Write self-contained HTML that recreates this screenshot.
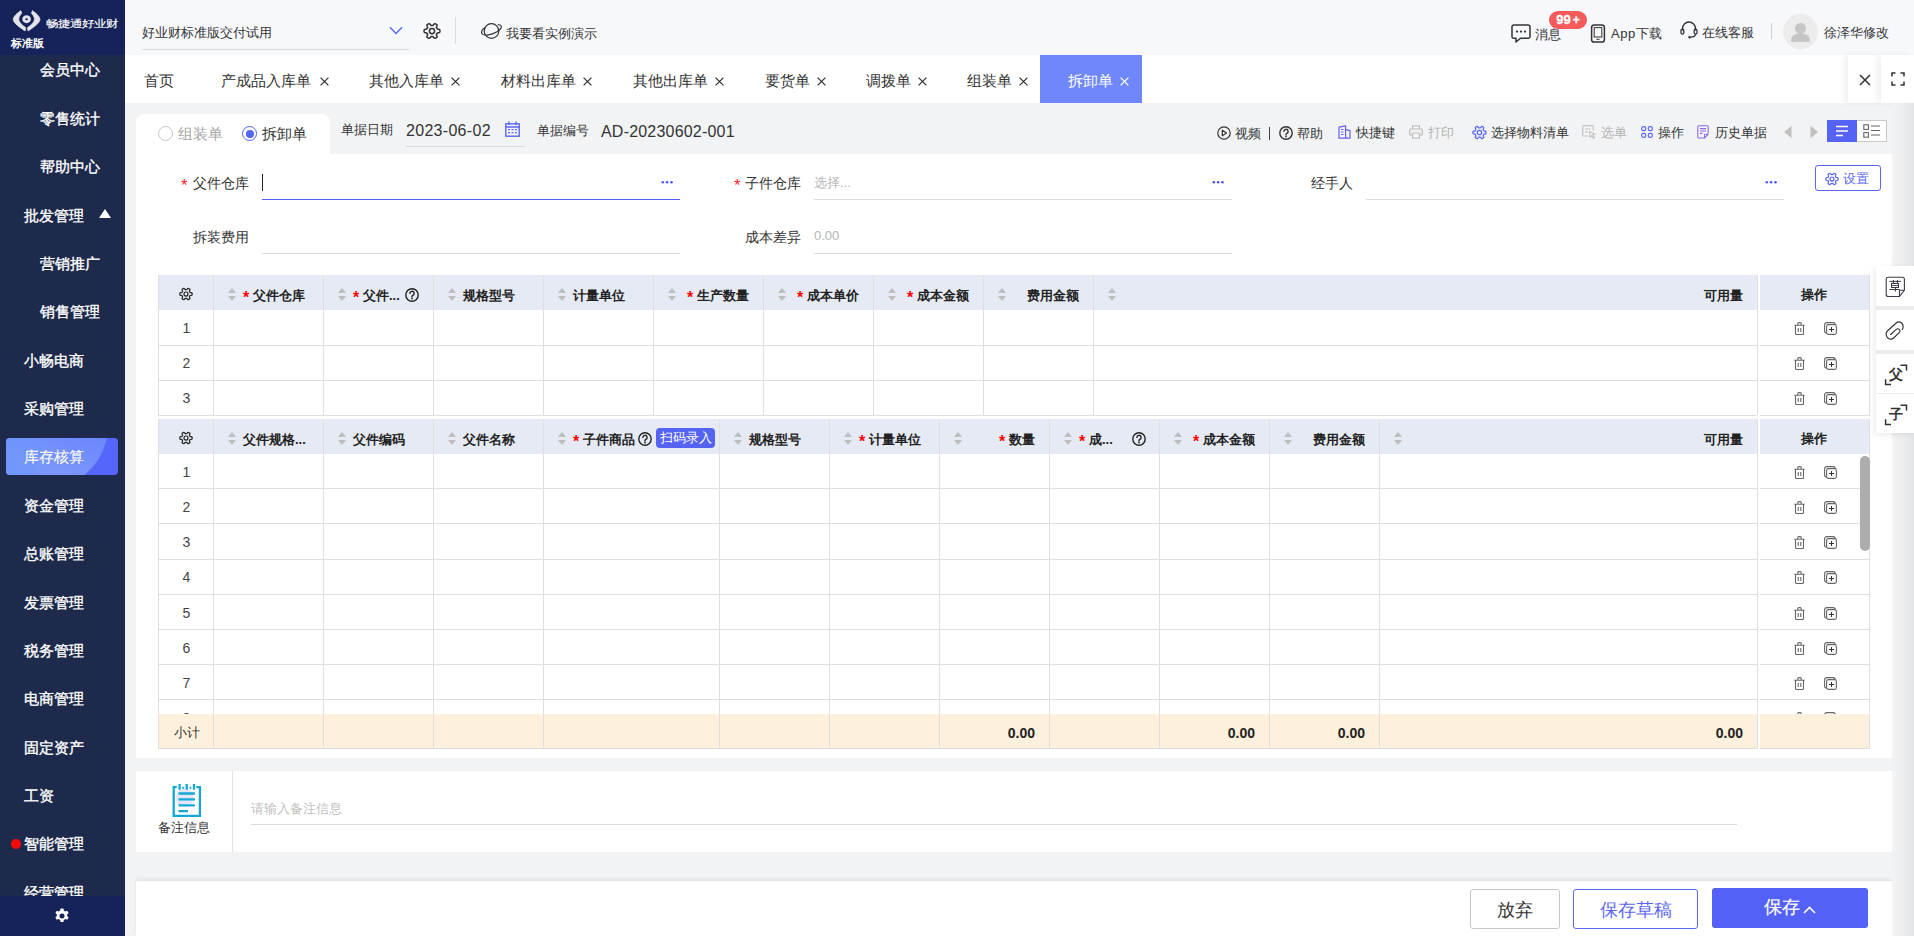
<!DOCTYPE html>
<html><head><meta charset="utf-8">
<style>
*{box-sizing:border-box;margin:0;padding:0}
html,body{width:1914px;height:936px;overflow:hidden}
body{position:relative;background:#f2f3f5;font-family:"Liberation Sans",sans-serif;color:#333;font-size:13px}
.a{position:absolute;white-space:nowrap}
.t{position:absolute;white-space:nowrap;line-height:20px;height:20px}
svg{position:absolute;overflow:visible}
/* sidebar */
#side{left:0;top:0;width:125px;height:936px;background:#1e2a4c}
#side .m{position:absolute;color:#fff;font-size:15px;line-height:20px;white-space:nowrap;font-weight:400;-webkit-text-stroke:0.35px #fff}
/* table */
.tb{position:absolute;background:#fff}
.hd{position:absolute;background:#e6eaf4}
.vl{position:absolute;width:1px;background:#dcdcdc}
.hl{position:absolute;height:1px;background:#dcdcdc}
.ht{position:absolute;font-size:13px;font-weight:bold;color:#333;line-height:20px;white-space:nowrap}
.rq{color:#f5222d;font-weight:normal}
</style></head><body>

<svg width="0" height="0" style="position:absolute">
<defs>
<symbol id="gear" viewBox="0 0 20 20"><path d="M18.8 10.0L18.8 10.6L18.7 11.1L18.4 11.7L17.2 11.9L16.1 12.1L15.7 12.4L15.6 12.7L15.4 13.1L15.2 13.4L14.9 13.8L14.8 14.2L15.3 15.3L15.7 16.5L15.4 17.0L14.9 17.3L14.4 17.6L13.9 17.9L13.4 18.1L12.8 18.1L11.9 17.2L11.2 16.3L10.8 16.1L10.4 16.2L10.0 16.2L9.6 16.2L9.2 16.1L8.8 16.3L8.1 17.2L7.2 18.1L6.6 18.1L6.1 17.9L5.6 17.6L5.1 17.3L4.6 17.0L4.3 16.5L4.7 15.3L5.2 14.2L5.1 13.8L4.8 13.4L4.6 13.1L4.4 12.7L4.3 12.4L3.9 12.1L2.8 11.9L1.6 11.7L1.3 11.1L1.2 10.6L1.2 10.0L1.2 9.4L1.3 8.9L1.6 8.3L2.8 8.1L3.9 7.9L4.3 7.6L4.4 7.3L4.6 6.9L4.8 6.6L5.1 6.2L5.2 5.8L4.7 4.7L4.3 3.5L4.6 3.0L5.1 2.7L5.6 2.4L6.1 2.1L6.6 1.9L7.2 1.9L8.1 2.8L8.8 3.7L9.2 3.9L9.6 3.8L10.0 3.8L10.4 3.8L10.8 3.9L11.2 3.7L11.9 2.8L12.8 1.9L13.4 1.9L13.9 2.1L14.4 2.4L14.9 2.7L15.4 3.0L15.7 3.5L15.3 4.7L14.8 5.8L14.9 6.2L15.2 6.6L15.4 6.9L15.6 7.3L15.7 7.6L16.1 7.9L17.2 8.1L18.4 8.3L18.7 8.9L18.8 9.4Z" fill="none" stroke="currentColor" stroke-width="1.7" stroke-linejoin="round"/><circle cx="10" cy="10" r="2.9" fill="none" stroke="currentColor" stroke-width="1.7"/></symbol>
<symbol id="sort" viewBox="0 0 8 13"><path d="M4 0L8 5H0Z M0 8H8L4 13Z" fill="#bdbdbd"/></symbol>
<symbol id="help" viewBox="0 0 14 14"><circle cx="7" cy="7" r="6.2" fill="none" stroke="currentColor" stroke-width="1.4"/><path d="M4.9 5.4a2.1 2.1 0 1 1 2.9 1.95c-.55.25-.8.6-.8 1.15v.6" fill="none" stroke="currentColor" stroke-width="1.4" stroke-linecap="round"/><circle cx="7" cy="10.6" r=".85" fill="currentColor"/></symbol>
<symbol id="trash" viewBox="0 0 11 13"><path d="M1.5 3.5V11.3a1.2 1.2 0 0 0 1.2 1.2h5.6a1.2 1.2 0 0 0 1.2-1.2V3.5M0.3 3.2H10.7M3.8 3V1.6a1 1 0 0 1 1-1h1.4a1 1 0 0 1 1 1V3M4.2 6V10M6.8 6V10" fill="none" stroke="#666" stroke-width="1.1"/></symbol>
<symbol id="copy" viewBox="0 0 13 13"><path d="M2.8 11.2a2.2 2.2 0 0 1-2.2-2.2V2.8a2.2 2.2 0 0 1 2.2-2.2h6.2a2.2 2.2 0 0 1 2.2 2.2" fill="none" stroke="#666" stroke-width="1.1"/><rect x="2.6" y="2.6" width="9.8" height="9.8" rx="1.8" fill="#fff" stroke="#666" stroke-width="1.1"/><path d="M7.5 5V10M5 7.5H10" stroke="#333" stroke-width="1.1"/></symbol>
</defs></svg>
<!-- SIDEBAR -->
<div id="side" class="a">
  <div class="a" style="left:0;top:0;width:125px;height:55px;background:#16235a"></div>
  <svg style="left:0;top:0" width="125" height="55" viewBox="0 0 125 55">
    <path d="M20.8 10.6C17.5 13.0 13.2 16.5 13.2 19.5C13.2 22.8 19.0 26.8 25.0 31.0C25.8 30.0 25.8 28.0 25.6 27.4C21.0 24.4 18.8 21.5 18.8 19.3C18.8 17.0 20.2 15.0 21.8 13.2Z" fill="#e4e4ea" stroke="#e4e4ea" stroke-width="0.6" stroke-linejoin="round"/>
    <path d="M32.4 10.6C35.7 13.0 40.0 16.5 40.0 19.5C40.0 22.8 34.2 26.8 28.2 31.0C27.4 30.0 27.4 28.0 27.6 27.4C32.2 24.4 34.4 21.5 34.4 19.3C34.4 17.0 33.0 15.0 31.4 13.2Z" fill="#e4e4ea" stroke="#e4e4ea" stroke-width="0.6" stroke-linejoin="round"/>
    <ellipse cx="26.6" cy="19.2" rx="2.8" ry="2.5" fill="none" stroke="#e4e4ea" stroke-width="3"/>
  </svg>
  <div class="a" style="left:46px;top:16px;color:#fff;font-size:12.3px;line-height:16px;transform:scaleY(0.8);transform-origin:0 50%;-webkit-text-stroke:0.2px #fff">畅捷通好业财</div>
  <div class="a" style="left:11px;top:35px;color:#fff;font-size:11px;line-height:16px;font-weight:600">标准版</div>
  <div class="m" style="left:40px;top:60px">会员中心</div>
  <div class="m" style="left:40px;top:109px">零售统计</div>
  <div class="m" style="left:40px;top:157px">帮助中心</div>
  <div class="m" style="left:24px;top:206px">批发管理</div>
  <svg style="left:99px;top:209px" width="12" height="9" viewBox="0 0 12 9"><path d="M6 0 L12 9 L0 9 Z" fill="#fff"/></svg>
  <div class="m" style="left:40px;top:254px">营销推广</div>
  <div class="m" style="left:40px;top:302px">销售管理</div>
  <div class="m" style="left:24px;top:351px">小畅电商</div>
  <div class="m" style="left:24px;top:399px">采购管理</div>
  <div class="a" style="left:6px;top:438px;width:112px;height:37px;border-radius:4px;overflow:hidden;background:#5666fb">
    <div class="a" style="left:-25px;top:-76px;width:127px;height:127px;border-radius:50%;background:linear-gradient(200deg,#5f7afc 25%,#7b98fc 75%);"></div>
    <div class="a" style="left:-10px;top:0;width:60px;height:37px;background:linear-gradient(90deg,rgba(106,150,252,0.9),rgba(106,150,252,0))"></div>
  </div>
  <div class="m" style="left:24px;top:447px;-webkit-text-stroke:0.1px #fff">库存核算</div>
  <div class="m" style="left:24px;top:496px">资金管理</div>
  <div class="m" style="left:24px;top:544px">总账管理</div>
  <div class="m" style="left:24px;top:593px">发票管理</div>
  <div class="m" style="left:24px;top:641px">税务管理</div>
  <div class="m" style="left:24px;top:689px">电商管理</div>
  <div class="m" style="left:24px;top:738px">固定资产</div>
  <div class="m" style="left:24px;top:786px">工资</div>
  <div class="a" style="left:11px;top:839px;width:9.5px;height:9.5px;border-radius:50%;background:#f50a0a"></div>
  <div class="m" style="left:24px;top:834px">智能管理</div>
  <div class="m" style="left:24px;top:883px">经营管理</div>
  <div class="a" style="left:0;top:896px;width:125px;height:40px;background:#16235a"></div>
  <svg style="left:54px;top:908px" width="16" height="16" viewBox="0 0 16 16">
    <path d="M6.6 0.5 h2.8 l0.4 2 a5.6 5.6 0 0 1 1.5 0.9 l1.9-0.7 1.4 2.4-1.5 1.3 a5.6 5.6 0 0 1 0 1.7 l1.5 1.3-1.4 2.4-1.9-0.7 a5.6 5.6 0 0 1-1.5 0.9 l-0.4 2 h-2.8 l-0.4-2 a5.6 5.6 0 0 1-1.5-0.9 l-1.9 0.7-1.4-2.4 1.5-1.3 a5.6 5.6 0 0 1 0-1.7 l-1.5-1.3 1.4-2.4 1.9 0.7 a5.6 5.6 0 0 1 1.5-0.9 Z M8 5.4 a2.6 2.6 0 1 0 0.01 0 Z" fill="#fff" fill-rule="evenodd"/>
  </svg>
</div>

<!-- TOP BAR -->
<div class="a" style="left:125px;top:0;width:1789px;height:55px;background:#f7f8fc"></div>
<div class="t" style="left:142px;top:23px;font-size:13px;color:#333">好业财标准版交付试用</div>
<div class="a" style="left:142px;top:49px;width:267px;height:1px;background:#dadada"></div>
<svg style="left:389px;top:26px" width="14" height="9" viewBox="0 0 14 9"><path d="M1 1.2L7 7.5L13 1.2" fill="none" stroke="#5a67f2" stroke-width="1.4"/></svg>
<svg style="left:423px;top:22px;color:#333" width="18" height="18"><use href="#gear"/></svg>
<div class="a" style="left:455px;top:17px;width:1px;height:27px;background:#dcdcdc"></div>
<svg style="left:480px;top:22px" width="23" height="18" viewBox="0 0 23 18"><circle cx="11.5" cy="9" r="7.3" fill="none" stroke="#333" stroke-width="1.2"/><path d="M5.2 5.4C1.6 7.6 0.6 10.6 2.4 12.1 4.6 14 11 13 16.6 10 20.6 7.8 22.5 4.8 20.8 3.4 20 2.7 18.9 2.6 17.7 2.9" fill="none" stroke="#333" stroke-width="1.2"/></svg>
<div class="t" style="left:506px;top:24px;font-size:13px;color:#333">我要看实例演示</div>

<svg style="left:1511px;top:24px" width="20" height="19" viewBox="0 0 20 19"><path d="M2.8 1h14.4a1.8 1.8 0 0 1 1.8 1.8v9.6a1.8 1.8 0 0 1-1.8 1.8H9.5L5 18V14.2H2.8A1.8 1.8 0 0 1 1 12.4V2.8A1.8 1.8 0 0 1 2.8 1Z" fill="none" stroke="#333" stroke-width="1.5" stroke-linejoin="round"/><circle cx="6" cy="7.6" r="1.1" fill="#333"/><circle cx="10" cy="7.6" r="1.1" fill="#333"/><circle cx="14" cy="7.6" r="1.1" fill="#333"/></svg>
<div class="t" style="left:1535px;top:25px;font-size:13px;color:#333">消息</div>
<div class="a" style="left:1549px;top:11px;width:38px;height:18px;border-radius:9px;background:#f65a5b;color:#fff;font-weight:bold;font-size:13px;line-height:18px;text-align:center;-webkit-text-stroke:0.3px #fff">99<span style="font-size:12px;margin-left:2px">+</span></div>
<svg style="left:1590px;top:24px" width="16" height="19" viewBox="0 0 16 19"><rect x="1.6" y="1" width="12.8" height="17" rx="2.6" fill="none" stroke="#333" stroke-width="1.5"/><rect x="4.2" y="3.6" width="7.6" height="9.4" fill="none" stroke="#333" stroke-width="1"/><path d="M6.5 15.3H9.5" stroke="#333" stroke-width="1.1"/></svg>
<div class="t" style="left:1611px;top:24px;font-size:13px;color:#333;letter-spacing:0.5px">App下载</div>
<svg style="left:1680px;top:21px" width="18" height="18" viewBox="0 0 18 18"><path d="M2.5 9.5V7.5a6.5 6.5 0 0 1 13 0V9.5" fill="none" stroke="#333" stroke-width="1.4"/><rect x="1" y="8.2" width="2.8" height="5" rx="1.4" fill="none" stroke="#333" stroke-width="1.3"/><rect x="14.2" y="8.2" width="2.8" height="5" rx="1.4" fill="none" stroke="#333" stroke-width="1.3"/><path d="M15.5 13.2C15.5 15 13.5 16 10.5 16.2" fill="none" stroke="#333" stroke-width="1.3"/><circle cx="9.6" cy="16.2" r="1.2" fill="#333"/></svg>
<div class="t" style="left:1702px;top:23px;font-size:13px;color:#333">在线客服</div>
<div class="a" style="left:1771px;top:23px;width:1px;height:16px;background:#cfcfcf"></div>
<div class="a" style="left:1783px;top:14px;width:35px;height:35px;border-radius:50%;background:#ececec;overflow:hidden">
  <div class="a" style="left:12.3px;top:8.5px;width:10.5px;height:11px;border-radius:50%;background:#c6c6c6"></div>
  <div class="a" style="left:8px;top:20px;width:19px;height:8px;border-radius:8px 8px 2px 2px;background:#c6c6c6"></div>
</div>
<div class="t" style="left:1824px;top:23px;font-size:13px;color:#333">徐泽华修改</div>
<!-- TAB BAR -->
<div class="a" style="left:125px;top:55px;width:1789px;height:48px;background:#fff"></div>
<div class="a" style="left:1040px;top:55px;width:102px;height:48px;background:#6f87fb"></div>
<div class="a" style="left:144px;top:71px;font-size:15px;line-height:20px;color:#333">首页</div>
<div class="a" style="left:221px;top:71px;font-size:15px;line-height:20px;color:#333">产成品入库单</div>
<svg style="left:320px;top:77px" width="9" height="9" viewBox="0 0 9 9"><path d="M0.6 0.6L8.4 8.4M8.4 0.6L0.6 8.4" stroke="#333" stroke-width="1.3"/></svg>
<div class="a" style="left:369px;top:71px;font-size:15px;line-height:20px;color:#333">其他入库单</div>
<svg style="left:451px;top:77px" width="9" height="9" viewBox="0 0 9 9"><path d="M0.6 0.6L8.4 8.4M8.4 0.6L0.6 8.4" stroke="#333" stroke-width="1.3"/></svg>
<div class="a" style="left:501px;top:71px;font-size:15px;line-height:20px;color:#333">材料出库单</div>
<svg style="left:583px;top:77px" width="9" height="9" viewBox="0 0 9 9"><path d="M0.6 0.6L8.4 8.4M8.4 0.6L0.6 8.4" stroke="#333" stroke-width="1.3"/></svg>
<div class="a" style="left:633px;top:71px;font-size:15px;line-height:20px;color:#333">其他出库单</div>
<svg style="left:715px;top:77px" width="9" height="9" viewBox="0 0 9 9"><path d="M0.6 0.6L8.4 8.4M8.4 0.6L0.6 8.4" stroke="#333" stroke-width="1.3"/></svg>
<div class="a" style="left:765px;top:71px;font-size:15px;line-height:20px;color:#333">要货单</div>
<svg style="left:817px;top:77px" width="9" height="9" viewBox="0 0 9 9"><path d="M0.6 0.6L8.4 8.4M8.4 0.6L0.6 8.4" stroke="#333" stroke-width="1.3"/></svg>
<div class="a" style="left:866px;top:71px;font-size:15px;line-height:20px;color:#333">调拨单</div>
<svg style="left:918px;top:77px" width="9" height="9" viewBox="0 0 9 9"><path d="M0.6 0.6L8.4 8.4M8.4 0.6L0.6 8.4" stroke="#333" stroke-width="1.3"/></svg>
<div class="a" style="left:967px;top:71px;font-size:15px;line-height:20px;color:#333">组装单</div>
<svg style="left:1019px;top:77px" width="9" height="9" viewBox="0 0 9 9"><path d="M0.6 0.6L8.4 8.4M8.4 0.6L0.6 8.4" stroke="#333" stroke-width="1.3"/></svg>
<div class="a" style="left:1068px;top:71px;font-size:15px;line-height:20px;color:#fff">拆卸单</div>
<svg style="left:1120px;top:77px" width="9" height="9" viewBox="0 0 9 9"><path d="M0.6 0.6L8.4 8.4M8.4 0.6L0.6 8.4" stroke="#fff" stroke-width="1.3"/></svg>
<div class="a" style="left:1848px;top:55px;width:33px;height:48px;background:#fff;box-shadow:-4px 0 6px rgba(0,0,0,0.06)"></div>
<svg style="left:1859px;top:74px" width="12" height="12" viewBox="0 0 12 12"><path d="M1 1L11 11M11 1L1 11" stroke="#333" stroke-width="1.5"/></svg>
<div class="a" style="left:1881px;top:55px;width:33px;height:48px;background:#fff;box-shadow:-4px 0 6px rgba(0,0,0,0.06)"></div>
<svg style="left:1891px;top:72px" width="14" height="14" viewBox="0 0 14 14"><path d="M1 4.5V1H4.5M9.5 1H13V4.5M13 9.5V13H9.5M4.5 13H1V9.5" fill="none" stroke="#333" stroke-width="1.5"/></svg>

<!-- radio tab -->
<div class="a" style="left:136px;top:114px;width:194px;height:45px;background:#fff;border-radius:8px 8px 0 0"></div>
<!-- main white panel -->
<div class="a" style="left:136px;top:154px;width:1756px;height:604px;background:#fff"></div>
<!-- remark panel -->
<div class="a" style="left:136px;top:771px;width:1756px;height:81px;background:#fff"></div>
<!-- footer -->
<div class="a" style="left:136px;top:881px;width:1756px;height:55px;background:#fff;box-shadow:0 -2px 4px rgba(0,0,0,0.08)"></div>
<!-- right shadow strip -->
<div class="a" style="left:1892px;top:103px;width:22px;height:833px;background:linear-gradient(to right,#f2f3f5 0%,#eeeff1 40%,#e3e4e7 100%)"></div>
<!-- HEADER STRIP -->
<div class="a" style="left:158px;top:126px;width:15px;height:15px;border-radius:50%;border:1px solid #c4c4c4;background:#fff"></div>
<div class="t" style="left:178px;top:124px;font-size:15px;color:#a6a6a6">组装单</div>
<div class="a" style="left:242px;top:126px;width:15px;height:15px;border-radius:50%;border:1.5px solid #5663f6;background:#fff"></div>
<div class="a" style="left:245.5px;top:129.5px;width:8px;height:8px;border-radius:50%;background:#5663f6"></div>
<div class="t" style="left:262px;top:124px;font-size:15px;color:#333">拆卸单</div>
<div class="t" style="left:341px;top:120px;font-size:13px;color:#333">单据日期</div>
<div class="t" style="left:406px;top:121px;font-size:16px;color:#333;letter-spacing:0.3px">2023-06-02</div>
<svg style="left:505px;top:121px" width="15" height="16" viewBox="0 0 15 16"><rect x="0.8" y="2.8" width="13.4" height="12.4" fill="none" stroke="#5a67f2" stroke-width="1.4"/><path d="M0.8 6H14.2M4 0.5V4M11 0.5V4" stroke="#5a67f2" stroke-width="1.4"/><path d="M3 8.6H5M6.5 8.6H8.5M10 8.6H12M3 11.6H5M6.5 11.6H8.5M10 11.6H12" stroke="#5a67f2" stroke-width="1.2"/></svg>
<div class="a" style="left:406px;top:146px;width:119px;height:1px;background:#dadada"></div>
<div class="t" style="left:537px;top:121px;font-size:13px;color:#333">单据编号</div>
<div class="t" style="left:601px;top:122px;font-size:16px;color:#333;letter-spacing:0.2px">AD-20230602-001</div>

<svg style="left:1217px;top:126px" width="14" height="14" viewBox="0 0 14 14"><circle cx="7" cy="7" r="6.2" fill="none" stroke="#333" stroke-width="1.2"/><path d="M5.3 4.2L9.6 7L5.3 9.8Z" fill="none" stroke="#333" stroke-width="1.2" stroke-linejoin="round"/></svg>
<div class="t" style="left:1235px;top:124px;font-size:13px;color:#333">视频</div>
<div class="a" style="left:1269px;top:127px;width:1px;height:13px;background:#444"></div>
<svg style="left:1279px;top:126px;color:#333" width="14" height="14"><use href="#help"/></svg>
<div class="t" style="left:1297px;top:124px;font-size:13px;color:#333">帮助</div>
<svg style="left:1338px;top:125px" width="13" height="14" viewBox="0 0 13 14"><path d="M1 2.2L7.6 0.8V13.2H1Z M7.6 4.6L12 5.6V13.2H7.6" fill="none" stroke="#6a5cf5" stroke-width="1.2" stroke-linejoin="round"/><path d="M3 4.5H5.6M3 7H5.6M3 9.5H5.6" stroke="#6a5cf5" stroke-width="1"/></svg>
<div class="t" style="left:1356px;top:123px;font-size:13px;color:#333">快捷键</div>
<svg style="left:1409px;top:125px" width="14" height="14" viewBox="0 0 14 14"><path d="M3.5 4V1H10.5V4M3.5 10H1.5A.8.8 0 0 1 .7 9.2V4.8A.8.8 0 0 1 1.5 4H12.5A.8.8 0 0 1 13.3 4.8V9.2A.8.8 0 0 1 12.5 10H10.5M3.5 8H10.5V13H3.5Z" fill="none" stroke="#bdbdbd" stroke-width="1.2" stroke-linejoin="round"/></svg>
<div class="t" style="left:1428px;top:123px;font-size:13px;color:#b3b3b3">打印</div>
<svg style="left:1472px;top:125px;color:#5a67f2" width="15" height="15"><use href="#gear"/></svg>
<div class="t" style="left:1491px;top:123px;font-size:13px;color:#333">选择物料清单</div>
<svg style="left:1582px;top:125px" width="14" height="14" viewBox="0 0 14 14"><path d="M6 11H1.6A.9.9 0 0 1 .7 10.1V1.6A.9.9 0 0 1 1.6 .7H10.4A.9.9 0 0 1 11.3 1.6V5.5M3 4H8.5M3 6.8H5.5" fill="none" stroke="#c4c4c4" stroke-width="1.2"/><path d="M7.5 6.5L13 9.2 10.6 10 12.6 12.8 11.6 13.5 9.6 10.7 8 12.5Z" fill="none" stroke="#c4c4c4" stroke-width="1.1" stroke-linejoin="round"/></svg>
<div class="t" style="left:1601px;top:123px;font-size:13px;color:#b3b3b3">选单</div>
<svg style="left:1641px;top:126px" width="12" height="12" viewBox="0 0 12 12"><rect x=".7" y=".7" width="4" height="4" rx="1.6" fill="none" stroke="#5a67f2" stroke-width="1.2"/><rect x="7.3" y=".7" width="4" height="4" rx="1.6" fill="none" stroke="#5a67f2" stroke-width="1.2"/><rect x=".7" y="7.3" width="4" height="4" rx="1.6" fill="none" stroke="#5a67f2" stroke-width="1.2"/><rect x="7.3" y="7.3" width="4" height="4" rx="1.6" fill="none" stroke="#5a67f2" stroke-width="1.2"/></svg>
<div class="t" style="left:1658px;top:123px;font-size:13px;color:#333">操作</div>
<svg style="left:1697px;top:125px" width="13" height="14" viewBox="0 0 13 14"><path d="M7.5 13H1.8A1 1 0 0 1 .8 12V1.8A1 1 0 0 1 1.8 .8H10.2A1 1 0 0 1 11.2 1.8V8.5M3 3.6H9M3 6H9M3 8.4H5.5M7.5 13V10.2A1 1 0 0 1 8.5 9.2H11.2Z" fill="none" stroke="#8a6cf0" stroke-width="1.1" stroke-linejoin="round"/></svg>
<div class="t" style="left:1715px;top:123px;font-size:13px;color:#333">历史单据</div>
<svg style="left:1784px;top:126px" width="8" height="12" viewBox="0 0 8 12"><path d="M7.5 0L0 6L7.5 12Z" fill="#bfbfbf"/></svg>
<svg style="left:1810px;top:126px" width="8" height="12" viewBox="0 0 8 12"><path d="M0.5 0L8 6L0.5 12Z" fill="#bfbfbf"/></svg>
<div class="a" style="left:1827px;top:120px;width:60px;height:22px;border:1px solid #c9c9c9;background:#fff"></div>
<div class="a" style="left:1827px;top:120px;width:30px;height:22px;background:#5563f5"></div>
<svg style="left:1835px;top:125px" width="14" height="12" viewBox="0 0 14 12"><path d="M1 1.5H13M1 6H13M1 10.5H8" stroke="#fff" stroke-width="1.3"/></svg>
<svg style="left:1863px;top:124px" width="18" height="14" viewBox="0 0 18 14"><rect x=".8" y=".8" width="4.6" height="4.6" fill="none" stroke="#666" stroke-width="1.1"/><rect x=".8" y="8.6" width="4.6" height="4.6" fill="none" stroke="#666" stroke-width="1.1"/><path d="M8 2H17M8 6.5H17M8 11H17" stroke="#666" stroke-width="1.1"/></svg>
<!-- FORM -->
<div class="t" style="left:181px;top:176px;font-size:17px;color:#f5222d">*</div>
<div class="t" style="left:193px;top:173px;font-size:14px;color:#333">父件仓库</div>
<div class="a" style="left:262px;top:174px;width:1px;height:17px;background:#222"></div>
<div class="a" style="left:262px;top:199px;width:418px;height:1px;background:#5060f5"></div>
<svg style="left:661px;top:180px" width="12" height="5" viewBox="0 0 12 5"><circle cx="1.8" cy="2.3" r="1.3" fill="#4b57f5"/><circle cx="6.1" cy="2.3" r="1.3" fill="#4b57f5"/><circle cx="10.5" cy="2.3" r="1.3" fill="#4b57f5"/></svg>
<div class="t" style="left:734px;top:176px;font-size:17px;color:#f5222d">*</div>
<div class="t" style="left:745px;top:173px;font-size:14px;color:#333">子件仓库</div>
<div class="t" style="left:814px;top:173px;font-size:13px;color:#b5b5b5">选择...</div>
<div class="a" style="left:814px;top:199px;width:418px;height:1px;background:#dadada"></div>
<svg style="left:1212px;top:180px" width="12" height="5" viewBox="0 0 12 5"><circle cx="1.8" cy="2.3" r="1.3" fill="#4b57f5"/><circle cx="6.1" cy="2.3" r="1.3" fill="#4b57f5"/><circle cx="10.5" cy="2.3" r="1.3" fill="#4b57f5"/></svg>
<div class="t" style="left:1311px;top:173px;font-size:14px;color:#333">经手人</div>
<div class="a" style="left:1366px;top:199px;width:418px;height:1px;background:#dadada"></div>
<svg style="left:1765px;top:180px" width="12" height="5" viewBox="0 0 12 5"><circle cx="1.8" cy="2.3" r="1.3" fill="#4b57f5"/><circle cx="6.1" cy="2.3" r="1.3" fill="#4b57f5"/><circle cx="10.5" cy="2.3" r="1.3" fill="#4b57f5"/></svg>
<div class="a" style="left:1815px;top:165px;width:66px;height:26px;border:1px solid #5a67f2;border-radius:3px"></div>
<svg style="left:1825px;top:172px;color:#5a67f2" width="14" height="14"><use href="#gear"/></svg>
<div class="t" style="left:1843px;top:169px;font-size:13px;color:#5a67f2">设置</div>
<div class="t" style="left:193px;top:227px;font-size:14px;color:#333">拆装费用</div>
<div class="a" style="left:262px;top:253px;width:418px;height:1px;background:#dadada"></div>
<div class="t" style="left:745px;top:227px;font-size:14px;color:#333">成本差异</div>
<div class="t" style="left:814px;top:226px;font-size:13px;color:#b5b5b5">0.00</div>
<div class="a" style="left:814px;top:253px;width:418px;height:1px;background:#dadada"></div>
<!-- TABLES -->
<div class="a" style="left:158px;top:275px;width:1599px;height:35px;background:#e6eaf4"></div>
<div class="a" style="left:1760px;top:275px;width:110px;height:35px;background:#e6eaf4"></div>
<div class="a" style="left:158px;top:275px;width:1px;height:140px;background:#dfdfdf"></div>
<div class="a" style="left:213px;top:275px;width:1px;height:140px;background:#dfdfdf"></div>
<div class="a" style="left:323px;top:275px;width:1px;height:140px;background:#dfdfdf"></div>
<div class="a" style="left:433px;top:275px;width:1px;height:140px;background:#dfdfdf"></div>
<div class="a" style="left:543px;top:275px;width:1px;height:140px;background:#dfdfdf"></div>
<div class="a" style="left:653px;top:275px;width:1px;height:140px;background:#dfdfdf"></div>
<div class="a" style="left:763px;top:275px;width:1px;height:140px;background:#dfdfdf"></div>
<div class="a" style="left:873px;top:275px;width:1px;height:140px;background:#dfdfdf"></div>
<div class="a" style="left:983px;top:275px;width:1px;height:140px;background:#dfdfdf"></div>
<div class="a" style="left:1093px;top:275px;width:1px;height:140px;background:#dfdfdf"></div>
<div class="a" style="left:1757px;top:275px;width:1px;height:140px;background:#dfdfdf"></div>
<div class="a" style="left:1869px;top:275px;width:1px;height:140px;background:#dfdfdf"></div>
<div class="a" style="left:158px;top:345px;width:1599px;height:1px;background:#dfdfdf"></div>
<div class="a" style="left:1760px;top:345px;width:110px;height:1px;background:#dfdfdf"></div>
<div class="a" style="left:158px;top:380px;width:1599px;height:1px;background:#dfdfdf"></div>
<div class="a" style="left:1760px;top:380px;width:110px;height:1px;background:#dfdfdf"></div>
<div class="a" style="left:158px;top:415px;width:1599px;height:1px;background:#dfdfdf"></div>
<div class="a" style="left:1760px;top:415px;width:110px;height:1px;background:#dfdfdf"></div>
<svg style="left:179px;top:287px;color:#222" width="14" height="14"><use href="#gear"/></svg>
<svg style="left:228px;top:288px" width="8" height="13"><use href="#sort"/></svg>
<div class="t" style="left:243px;top:288px;font-size:16px;color:#f00;font-weight:bold">*</div>
<div class="t" style="left:253px;top:286px;font-size:13px;color:#222;font-weight:bold;">父件仓库</div>
<svg style="left:338px;top:288px" width="8" height="13"><use href="#sort"/></svg>
<div class="t" style="left:353px;top:288px;font-size:16px;color:#f00;font-weight:bold">*</div>
<div class="t" style="left:363px;top:286px;font-size:13px;color:#222;font-weight:bold;">父件...</div>
<svg style="left:405px;top:288px;color:#222" width="14" height="14"><use href="#help"/></svg>
<svg style="left:448px;top:288px" width="8" height="13"><use href="#sort"/></svg>
<div class="t" style="left:463px;top:286px;font-size:13px;color:#222;font-weight:bold;">规格型号</div>
<svg style="left:558px;top:288px" width="8" height="13"><use href="#sort"/></svg>
<div class="t" style="left:573px;top:286px;font-size:13px;color:#222;font-weight:bold;">计量单位</div>
<svg style="left:668px;top:288px" width="8" height="13"><use href="#sort"/></svg>
<div class="t" style="left:687px;top:288px;font-size:16px;color:#f00;font-weight:bold">*</div>
<div class="t" style="left:449px;width:300px;text-align:right;top:286px;font-size:13px;color:#222;font-weight:bold;">生产数量</div>
<svg style="left:778px;top:288px" width="8" height="13"><use href="#sort"/></svg>
<div class="t" style="left:797px;top:288px;font-size:16px;color:#f00;font-weight:bold">*</div>
<div class="t" style="left:559px;width:300px;text-align:right;top:286px;font-size:13px;color:#222;font-weight:bold;">成本单价</div>
<svg style="left:888px;top:288px" width="8" height="13"><use href="#sort"/></svg>
<div class="t" style="left:907px;top:288px;font-size:16px;color:#f00;font-weight:bold">*</div>
<div class="t" style="left:669px;width:300px;text-align:right;top:286px;font-size:13px;color:#222;font-weight:bold;">成本金额</div>
<svg style="left:998px;top:288px" width="8" height="13"><use href="#sort"/></svg>
<div class="t" style="left:779px;width:300px;text-align:right;top:286px;font-size:13px;color:#222;font-weight:bold;">费用金额</div>
<svg style="left:1108px;top:288px" width="8" height="13"><use href="#sort"/></svg>
<div class="t" style="left:1443px;width:300px;text-align:right;top:286px;font-size:13px;color:#222;font-weight:bold;">可用量</div>
<div class="t" style="left:1801px;top:285px;font-size:13px;color:#222;font-weight:bold;">操作</div>
<div class="t" style="left:159px;width:55px;text-align:center;top:318px;font-size:14px;color:#444">1</div>
<svg style="left:1794px;top:322px" width="11" height="13"><use href="#trash"/></svg><svg style="left:1824px;top:322px" width="13" height="13"><use href="#copy"/></svg>
<div class="t" style="left:159px;width:55px;text-align:center;top:353px;font-size:14px;color:#444">2</div>
<svg style="left:1794px;top:357px" width="11" height="13"><use href="#trash"/></svg><svg style="left:1824px;top:357px" width="13" height="13"><use href="#copy"/></svg>
<div class="t" style="left:159px;width:55px;text-align:center;top:388px;font-size:14px;color:#444">3</div>
<svg style="left:1794px;top:392px" width="11" height="13"><use href="#trash"/></svg><svg style="left:1824px;top:392px" width="13" height="13"><use href="#copy"/></svg>
<div class="a" style="left:158px;top:419px;width:1599px;height:35px;background:#e6eaf4"></div>
<div class="a" style="left:1760px;top:419px;width:110px;height:35px;background:#e6eaf4"></div>
<div class="a" style="left:158px;top:488px;width:1599px;height:1px;background:#dfdfdf"></div>
<div class="a" style="left:1760px;top:488px;width:110px;height:1px;background:#dfdfdf"></div>
<div class="a" style="left:158px;top:523px;width:1599px;height:1px;background:#dfdfdf"></div>
<div class="a" style="left:1760px;top:523px;width:110px;height:1px;background:#dfdfdf"></div>
<div class="a" style="left:158px;top:559px;width:1599px;height:1px;background:#dfdfdf"></div>
<div class="a" style="left:1760px;top:559px;width:110px;height:1px;background:#dfdfdf"></div>
<div class="a" style="left:158px;top:594px;width:1599px;height:1px;background:#dfdfdf"></div>
<div class="a" style="left:1760px;top:594px;width:110px;height:1px;background:#dfdfdf"></div>
<div class="a" style="left:158px;top:629px;width:1599px;height:1px;background:#dfdfdf"></div>
<div class="a" style="left:1760px;top:629px;width:110px;height:1px;background:#dfdfdf"></div>
<div class="a" style="left:158px;top:664px;width:1599px;height:1px;background:#dfdfdf"></div>
<div class="a" style="left:1760px;top:664px;width:110px;height:1px;background:#dfdfdf"></div>
<div class="a" style="left:158px;top:699px;width:1599px;height:1px;background:#dfdfdf"></div>
<div class="a" style="left:1760px;top:699px;width:110px;height:1px;background:#dfdfdf"></div>
<div class="t" style="left:159px;width:55px;text-align:center;top:462px;font-size:14px;color:#444">1</div>
<svg style="left:1794px;top:466px" width="11" height="13"><use href="#trash"/></svg><svg style="left:1824px;top:466px" width="13" height="13"><use href="#copy"/></svg>
<div class="t" style="left:159px;width:55px;text-align:center;top:497px;font-size:14px;color:#444">2</div>
<svg style="left:1794px;top:501px" width="11" height="13"><use href="#trash"/></svg><svg style="left:1824px;top:501px" width="13" height="13"><use href="#copy"/></svg>
<div class="t" style="left:159px;width:55px;text-align:center;top:532px;font-size:14px;color:#444">3</div>
<svg style="left:1794px;top:536px" width="11" height="13"><use href="#trash"/></svg><svg style="left:1824px;top:536px" width="13" height="13"><use href="#copy"/></svg>
<div class="t" style="left:159px;width:55px;text-align:center;top:567px;font-size:14px;color:#444">4</div>
<svg style="left:1794px;top:571px" width="11" height="13"><use href="#trash"/></svg><svg style="left:1824px;top:571px" width="13" height="13"><use href="#copy"/></svg>
<div class="t" style="left:159px;width:55px;text-align:center;top:603px;font-size:14px;color:#444">5</div>
<svg style="left:1794px;top:607px" width="11" height="13"><use href="#trash"/></svg><svg style="left:1824px;top:607px" width="13" height="13"><use href="#copy"/></svg>
<div class="t" style="left:159px;width:55px;text-align:center;top:638px;font-size:14px;color:#444">6</div>
<svg style="left:1794px;top:642px" width="11" height="13"><use href="#trash"/></svg><svg style="left:1824px;top:642px" width="13" height="13"><use href="#copy"/></svg>
<div class="t" style="left:159px;width:55px;text-align:center;top:673px;font-size:14px;color:#444">7</div>
<svg style="left:1794px;top:677px" width="11" height="13"><use href="#trash"/></svg><svg style="left:1824px;top:677px" width="13" height="13"><use href="#copy"/></svg>
<div class="t" style="left:159px;width:55px;text-align:center;top:708px;font-size:14px;color:#444">8</div>
<svg style="left:1794px;top:712px" width="11" height="13"><use href="#trash"/></svg><svg style="left:1824px;top:712px" width="13" height="13"><use href="#copy"/></svg>
<div class="a" style="left:158px;top:714px;width:1599px;height:35px;background:#fdf0dc"></div>
<div class="a" style="left:1760px;top:714px;width:110px;height:35px;background:#fdf0dc"></div>
<div class="a" style="left:158px;top:748px;width:1599px;height:1px;background:#dfdfdf"></div>
<div class="a" style="left:1760px;top:748px;width:110px;height:1px;background:#dfdfdf"></div>
<div class="a" style="left:158px;top:419px;width:1px;height:330px;background:#dfdfdf"></div>
<div class="a" style="left:213px;top:419px;width:1px;height:330px;background:#dfdfdf"></div>
<div class="a" style="left:323px;top:419px;width:1px;height:330px;background:#dfdfdf"></div>
<div class="a" style="left:433px;top:419px;width:1px;height:330px;background:#dfdfdf"></div>
<div class="a" style="left:543px;top:419px;width:1px;height:330px;background:#dfdfdf"></div>
<div class="a" style="left:719px;top:419px;width:1px;height:330px;background:#dfdfdf"></div>
<div class="a" style="left:829px;top:419px;width:1px;height:330px;background:#dfdfdf"></div>
<div class="a" style="left:939px;top:419px;width:1px;height:330px;background:#dfdfdf"></div>
<div class="a" style="left:1049px;top:419px;width:1px;height:330px;background:#dfdfdf"></div>
<div class="a" style="left:1159px;top:419px;width:1px;height:330px;background:#dfdfdf"></div>
<div class="a" style="left:1269px;top:419px;width:1px;height:330px;background:#dfdfdf"></div>
<div class="a" style="left:1379px;top:419px;width:1px;height:330px;background:#dfdfdf"></div>
<div class="a" style="left:1757px;top:419px;width:1px;height:330px;background:#dfdfdf"></div>
<div class="a" style="left:1869px;top:419px;width:1px;height:330px;background:#dfdfdf"></div>
<svg style="left:179px;top:431px;color:#222" width="14" height="14"><use href="#gear"/></svg>
<svg style="left:228px;top:432px" width="8" height="13"><use href="#sort"/></svg>
<div class="t" style="left:243px;top:430px;font-size:13px;color:#222;font-weight:bold;">父件规格...</div>
<svg style="left:338px;top:432px" width="8" height="13"><use href="#sort"/></svg>
<div class="t" style="left:353px;top:430px;font-size:13px;color:#222;font-weight:bold;">父件编码</div>
<svg style="left:448px;top:432px" width="8" height="13"><use href="#sort"/></svg>
<div class="t" style="left:463px;top:430px;font-size:13px;color:#222;font-weight:bold;">父件名称</div>
<svg style="left:558px;top:432px" width="8" height="13"><use href="#sort"/></svg>
<div class="t" style="left:573px;top:432px;font-size:16px;color:#f00;font-weight:bold">*</div>
<div class="t" style="left:583px;top:430px;font-size:13px;color:#222;font-weight:bold;">子件商品</div>
<svg style="left:638px;top:432px;color:#222" width="14" height="14"><use href="#help"/></svg>
<div class="a" style="left:656px;top:428px;width:59px;height:20px;border-radius:4px;background:#5563f5;color:#fff;font-size:13px;line-height:20px;text-align:center">扫码录入</div>
<svg style="left:734px;top:432px" width="8" height="13"><use href="#sort"/></svg>
<div class="t" style="left:749px;top:430px;font-size:13px;color:#222;font-weight:bold;">规格型号</div>
<svg style="left:844px;top:432px" width="8" height="13"><use href="#sort"/></svg>
<div class="t" style="left:859px;top:432px;font-size:16px;color:#f00;font-weight:bold">*</div>
<div class="t" style="left:869px;top:430px;font-size:13px;color:#222;font-weight:bold;">计量单位</div>
<svg style="left:954px;top:432px" width="8" height="13"><use href="#sort"/></svg>
<div class="t" style="left:999px;top:432px;font-size:16px;color:#f00;font-weight:bold">*</div>
<div class="t" style="left:735px;width:300px;text-align:right;top:430px;font-size:13px;color:#222;font-weight:bold;">数量</div>
<svg style="left:1064px;top:432px" width="8" height="13"><use href="#sort"/></svg>
<div class="t" style="left:1079px;top:432px;font-size:16px;color:#f00;font-weight:bold">*</div>
<div class="t" style="left:1089px;top:430px;font-size:13px;color:#222;font-weight:bold;">成...</div>
<svg style="left:1132px;top:432px;color:#222" width="14" height="14"><use href="#help"/></svg>
<svg style="left:1174px;top:432px" width="8" height="13"><use href="#sort"/></svg>
<div class="t" style="left:1193px;top:432px;font-size:16px;color:#f00;font-weight:bold">*</div>
<div class="t" style="left:955px;width:300px;text-align:right;top:430px;font-size:13px;color:#222;font-weight:bold;">成本金额</div>
<svg style="left:1284px;top:432px" width="8" height="13"><use href="#sort"/></svg>
<div class="t" style="left:1065px;width:300px;text-align:right;top:430px;font-size:13px;color:#222;font-weight:bold;">费用金额</div>
<svg style="left:1394px;top:432px" width="8" height="13"><use href="#sort"/></svg>
<div class="t" style="left:1443px;width:300px;text-align:right;top:430px;font-size:13px;color:#222;font-weight:bold;">可用量</div>
<div class="t" style="left:1801px;top:429px;font-size:13px;color:#222;font-weight:bold;">操作</div>
<div class="t" style="left:174px;top:723px;font-size:13px;color:#333;">小计</div>
<div class="t" style="left:735px;width:300px;text-align:right;top:723px;font-size:14px;color:#222;font-weight:bold;">0.00</div>
<div class="t" style="left:955px;width:300px;text-align:right;top:723px;font-size:14px;color:#222;font-weight:bold;">0.00</div>
<div class="t" style="left:1065px;width:300px;text-align:right;top:723px;font-size:14px;color:#222;font-weight:bold;">0.00</div>
<div class="t" style="left:1443px;width:300px;text-align:right;top:723px;font-size:14px;color:#222;font-weight:bold;">0.00</div>
<div class="a" style="left:1860px;top:456px;width:10px;height:95px;border-radius:5px;background:#adadad"></div>
<!-- /TABLES -->
<!-- REMARK -->
<div class="a" style="left:232px;top:771px;width:1px;height:81px;background:#e3e3e3"></div>
<svg style="left:166px;top:778px" width="42" height="44" viewBox="0 0 42 44">
  <circle cx="18.8" cy="19.8" r="9.2" fill="#e6e6fa"/>
  <path d="M10.8 9.1H7.7V37.9H33.9V9.1H30.3" fill="none" stroke="#13a8d6" stroke-width="2.3"/>
  <path d="M13.6 6V11.8M20.7 6V11.8M28 6V11.8" stroke="#13a8d6" stroke-width="2.3"/>
  <circle cx="17.1" cy="9.8" r="1.1" fill="#13a8d6"/><circle cx="24.3" cy="9.8" r="1.1" fill="#13a8d6"/>
  <path d="M12.5 15.5H28.9M12.5 21.4H28.9M12.5 27.3H28.9M12.5 33.2H22" stroke="#13a8d6" stroke-width="2.3"/>
</svg>
<div class="t" style="left:158px;top:818px;font-size:13px;color:#333">备注信息</div>
<div class="t" style="left:251px;top:799px;font-size:13px;color:#bfbfbf">请输入备注信息</div>
<div class="a" style="left:251px;top:824px;width:1486px;height:1px;background:#dadada"></div>

<!-- FOOTER BUTTONS -->
<div class="a" style="left:1470px;top:889px;width:90px;height:40px;border:1px solid #c8c8c8;border-radius:3px;background:#fff"></div>
<div class="t" style="left:1470px;width:90px;text-align:center;top:900px;font-size:18px;color:#333">放弃</div>
<div class="a" style="left:1573px;top:889px;width:125px;height:40px;border:1px solid #5a67f2;border-radius:3px;background:#fff"></div>
<div class="t" style="left:1573px;width:125px;text-align:center;top:900px;font-size:18px;color:#5a67f2">保存草稿</div>
<div class="a" style="left:1712px;top:888px;width:156px;height:40px;border-radius:3px;background:#5361f6"></div>
<div class="t" style="left:1764px;top:897px;font-size:18px;color:#fff;-webkit-text-stroke:0.2px #fff">保存</div>
<svg style="left:1803px;top:906px" width="13" height="8" viewBox="0 0 13 8"><path d="M1 7L6.5 1.5L12 7" fill="none" stroke="#fff" stroke-width="1.6"/></svg>

<!-- FLOATING BUTTONS -->
<div class="a" style="left:1876px;top:266px;width:38px;height:167px;background:#ececee;box-shadow:-2px 2px 6px rgba(0,0,0,0.08)"></div>
<div class="a" style="left:1876px;top:266px;width:38px;height:40px;background:#fff"></div>
<div class="a" style="left:1876px;top:310px;width:38px;height:40px;background:#fff"></div>
<div class="a" style="left:1876px;top:354px;width:38px;height:39px;background:#fff"></div>
<div class="a" style="left:1876px;top:394px;width:38px;height:39px;background:#fff"></div>
<svg style="left:1880px;top:270px" width="32" height="32" viewBox="0 0 32 32">
  <path d="M24.4 20.2V9.2a2 2 0 0 0-2-2H8.2a2 2 0 0 0-2 2V24.5a2 2 0 0 0 2 2H19.5Z" fill="none" stroke="#3a3a4a" stroke-width="1.1" stroke-linejoin="round"/>
  <path d="M19.5 26.5V20.2H24.4" fill="none" stroke="#3a3a4a" stroke-width="1.1"/>
  <path d="M9.5 11.4H21M13.3 10V13M17.4 10V13M9.5 19.5H19.5M15.4 18V21.6" stroke="#3a3a4a" stroke-width="1"/>
  <rect x="11.5" y="13.5" width="7" height="4" fill="none" stroke="#3a3a4a" stroke-width="1"/>
  <path d="M11.5 15.5H18.5" stroke="#3a3a4a" stroke-width="0.9"/>
</svg>
<svg style="left:1880px;top:314px" width="32" height="32" viewBox="0 0 32 32">
  <path d="M22.3 15.3C23.6 13.6 23.4 10.6 21.6 9 19.8 7.6 17.6 7.8 16.2 9L7.6 16.8C5.8 18.4 5.6 21.6 7.4 23.6 9.2 25.6 12 25.6 13.6 24L19.2 18.6C20.2 17.6 20.2 16.2 19.3 15.4 18.4 14.6 17.2 14.6 16.3 15.4L10.6 20.5" fill="none" stroke="#333" stroke-width="1.15" stroke-linecap="round"/>
</svg>
<svg style="left:1880px;top:358px" width="32" height="32" viewBox="0 0 32 32"><path d="M20.5 7.2H26.5V12.5M5.6 21.2V26.5H11" fill="none" stroke="#333" stroke-width="1.5"/></svg>
<div class="a" style="left:1889px;top:364px;font-size:14px;line-height:20px;color:#333;font-weight:bold">父</div>
<svg style="left:1880px;top:398px" width="32" height="32" viewBox="0 0 32 32"><path d="M20.5 7.2H26.5V12.5M5.6 21.2V26.5H11" fill="none" stroke="#333" stroke-width="1.5"/></svg>
<div class="a" style="left:1889px;top:404px;font-size:14px;line-height:20px;color:#333;font-weight:bold">子</div>

</body></html>
